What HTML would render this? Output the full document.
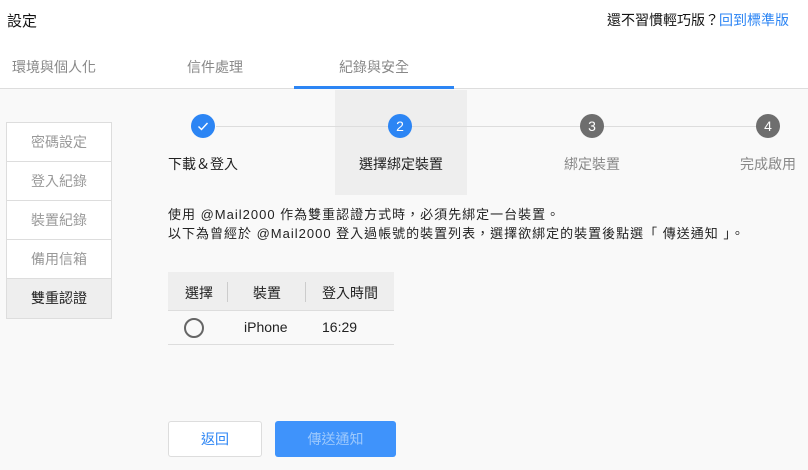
<!DOCTYPE html>
<html><head><meta charset="utf-8"><style>
*{margin:0;padding:0;box-sizing:border-box}
body{width:808px;height:470px;overflow:hidden;background:#f9f9f9;font-family:"Liberation Sans","Noto Sans CJK TC",sans-serif;color:#222;position:relative}
.top{position:absolute;left:0;top:0;width:808px;height:89px;background:#fff;border-bottom:1px solid #ddd}
.a{position:absolute;white-space:nowrap}
.circ{position:absolute;width:24px;height:24px;border-radius:50%;color:#fff;font-size:14px;text-align:center;line-height:24px}
.line{position:absolute;height:1px;background:#ddd;top:126px}
.side{position:absolute;left:6px;top:122px;width:106px;border:1px solid #ddd;background:#fff}
.side div{height:39px;line-height:38px;text-align:center;font-size:14px;color:#999;border-bottom:1px solid #ddd}
.side div:last-child{border-bottom:none;background:#eee;color:#222}
</style></head><body>
<div class="top"></div>
<div class="a" style="left:7px;top:10px;font-size:15px;color:#111">設定</div>
<div class="a" style="left:607px;top:10px;font-size:14px;color:#111">還不習慣輕巧版？<span style="color:#2c85f4">回到標準版</span></div>
<div class="a" style="left:12px;top:57px;font-size:14px;color:#888">環境與個人化</div>
<div class="a" style="left:187px;top:57px;font-size:14px;color:#888">信件處理</div>
<div class="a" style="left:339px;top:57px;font-size:14px;color:#888">紀錄與安全</div>
<div class="a" style="left:294px;top:86px;width:160px;height:3px;background:#2c85f4"></div>

<div class="a" style="left:335px;top:90px;width:132px;height:105px;background:#eee"></div>
<div class="line" style="left:216px;width:172px"></div>
<div class="line" style="left:412px;width:168px"></div>
<div class="line" style="left:604px;width:152px"></div>
<div class="circ" style="left:191px;top:114px;background:#2c85f4"><svg width="24" height="24" viewBox="0 0 24 24"><path d="M7.5 12.5l3 3 6-6.5" stroke="#fff" stroke-width="1.4" fill="none"/></svg></div>
<div class="circ" style="left:388px;top:114px;background:#2c85f4">2</div>
<div class="circ" style="left:580px;top:114px;background:#6e6e6e">3</div>
<div class="circ" style="left:756px;top:114px;background:#6e6e6e">4</div>
<div class="a" style="left:168px;top:154px;font-size:14px;color:#222">下載＆登入</div>
<div class="a" style="left:359px;top:154px;font-size:14px;color:#222">選擇綁定裝置</div>
<div class="a" style="left:564px;top:154px;font-size:14px;color:#888">綁定裝置</div>
<div class="a" style="left:740px;top:154px;font-size:14px;color:#888">完成啟用</div>

<div class="side"><div>密碼設定</div><div>登入紀錄</div><div>裝置紀錄</div><div>備用信箱</div><div>雙重認證</div></div>

<div class="a" style="left:168px;top:205px;font-size:13px;line-height:19px;color:#222;letter-spacing:1px">使用 @Mail2000 作為雙重認證方式時，必須先綁定一台裝置。<br>以下為曾經於 @Mail2000 登入過帳號的裝置列表，選擇欲綁定的裝置後點選「 傳送通知 」。</div>

<div class="a" style="left:168px;top:272px;width:226px;height:39px;background:#eee;border-bottom:1px solid #ddd"></div>
<div class="a" style="left:227px;top:282px;width:1px;height:20px;background:#ccc"></div>
<div class="a" style="left:305px;top:282px;width:1px;height:20px;background:#ccc"></div>
<div class="a" style="left:185px;top:283px;font-size:14px">選擇</div>
<div class="a" style="left:253px;top:283px;font-size:14px">裝置</div>
<div class="a" style="left:322px;top:283px;font-size:14px">登入時間</div>
<div class="a" style="left:168px;top:344px;width:226px;height:1px;background:#ddd"></div>
<div class="a" style="left:184px;top:318px;width:20px;height:20px;border:2px solid #666;border-radius:50%"></div>
<div class="a" style="left:244px;top:319px;font-size:14px">iPhone</div>
<div class="a" style="left:322px;top:319px;font-size:14px">16:29</div>

<div class="a" style="left:168px;top:421px;width:94px;height:36px;background:#fff;border:1px solid #ddd;border-radius:3px;text-align:center;line-height:34px;font-size:14px;color:#2c85f4">返回</div>
<div class="a" style="left:275px;top:421px;width:121px;height:36px;background:#3f93fb;border-radius:3px;text-align:center;line-height:36px;font-size:14px;color:#9cc8fc">傳送通知</div>
</body></html>
